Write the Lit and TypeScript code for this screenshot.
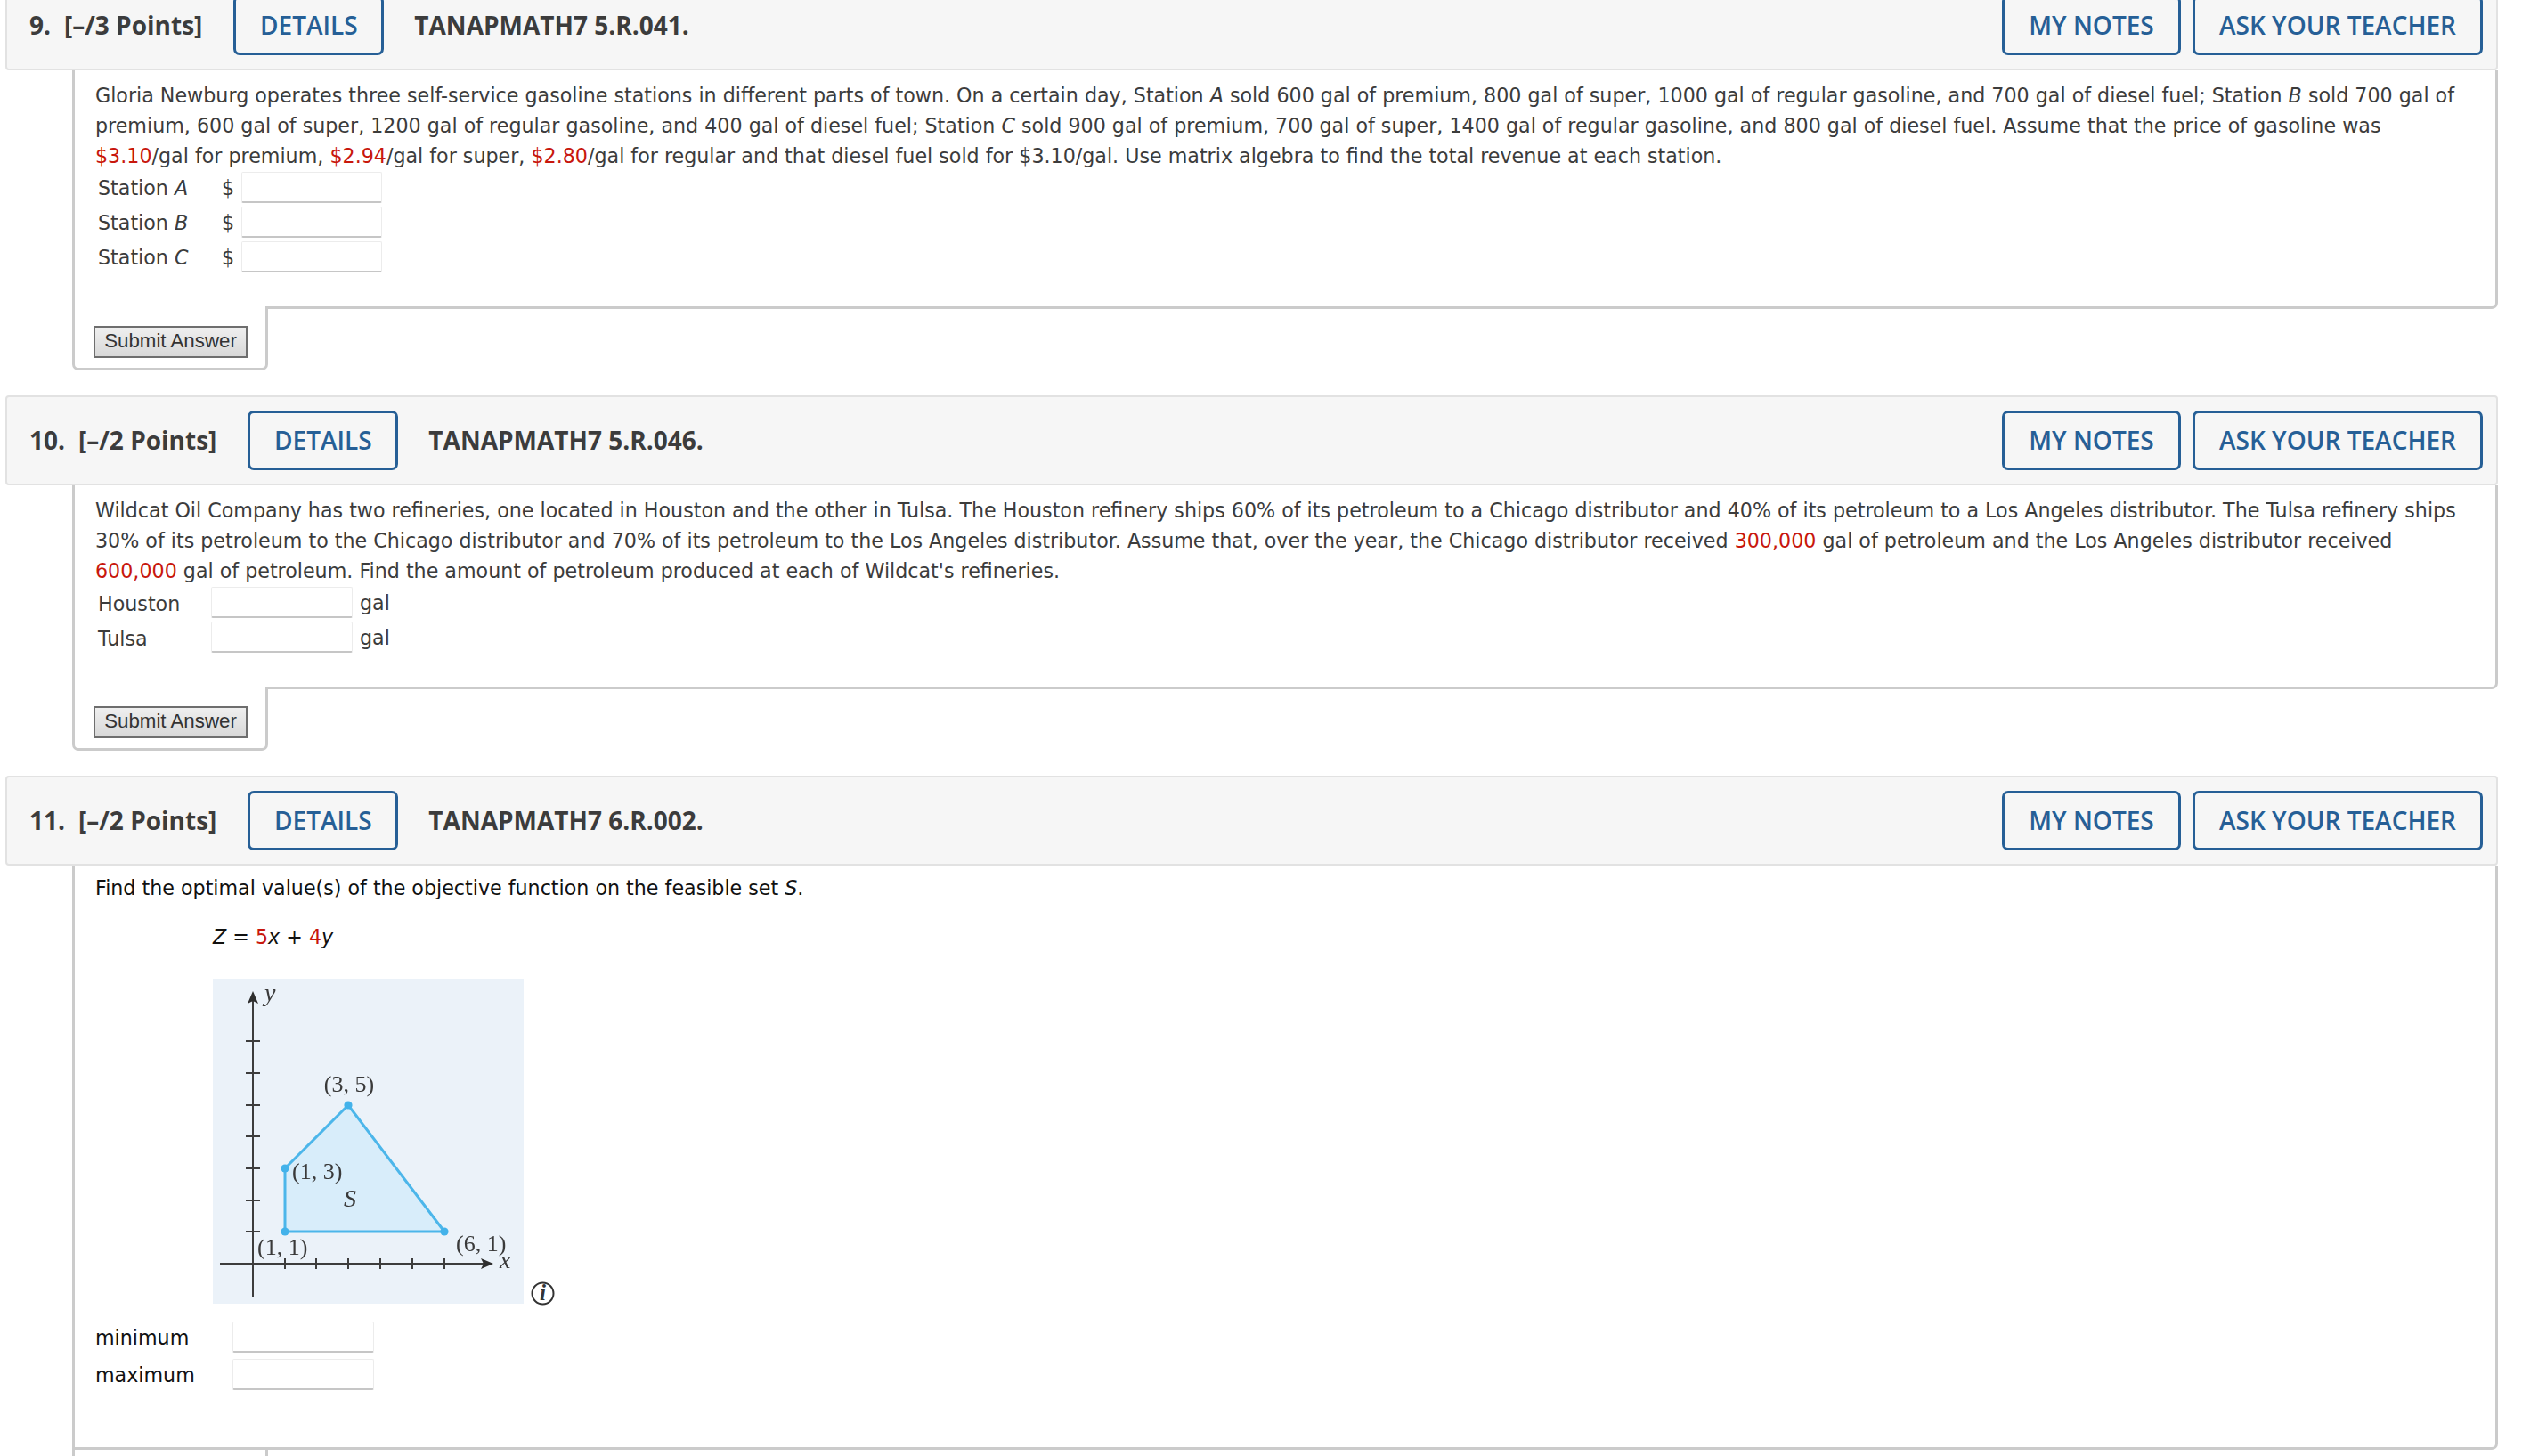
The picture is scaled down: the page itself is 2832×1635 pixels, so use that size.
import { LitElement, html, css, svg } from 'lit';
import { customElement } from 'lit/decorators.js';

const yTicks = [70, 106, 142, 177, 213, 249, 284];
const xTicks = [81, 116, 152, 188, 224, 260];

@customElement('app-root')
export class AppRoot extends LitElement {
  static styles = css`
    :host {
      display: block;
      height: 1635px;
      overflow: hidden;
      padding: 0 27px 0 6px;
      box-sizing: border-box;
      background: #fff;
      color: #3c3c3c;
      font-family: 'DejaVu Sans', Verdana, sans-serif;
      font-size: 22.2px;
    }

    .question {
      margin-bottom: 28px;
    }

    .first {
      margin-top: -22px;
    }

    .head {
      display: flex;
      align-items: center;
      box-sizing: border-box;
      height: 101px;
      padding: 0 15px 0 25px;
      background: #f6f6f6;
      border: 2px solid #e2e2e2;
      border-radius: 4px;
      font-family: 'Open Sans', sans-serif;
      font-size: 28px;
      font-weight: 600;
    }

    .points {
      display: flex;
      gap: 15px;
      padding-bottom: 2px;
      font-weight: 700;
      white-space: nowrap;
    }

    .btn {
      box-sizing: border-box;
      height: 67px;
      display: flex;
      align-items: center;
      justify-content: center;
      padding-bottom: 2px;
      border: 3px solid #265f96;
      border-radius: 7px;
      color: #265f96;
      white-space: nowrap;
    }

    .details {
      width: 169px;
      margin-left: 35px;
    }

    .title {
      margin-left: 34px;
      padding-bottom: 2px;
      flex: 1;
      font-weight: 700;
      white-space: nowrap;
    }

    .notes {
      width: 201px;
      margin-right: 13px;
    }

    .ask {
      width: 326px;
    }

    .box {
      margin-left: 75px;
      padding: 11px 20px 0 23px;
      border: solid #cbcbcb;
      border-width: 0 3px 3px 3px;
      border-bottom-right-radius: 7px;
      box-sizing: border-box;
    }

    .text {
      line-height: 34px;
      white-space: nowrap;
    }

    .text i {
      font-style: oblique;
    }

    .red {
      color: #c8170d;
    }

    .answers {
      display: grid;
      row-gap: 4px;
      margin-top: 1px;
      padding-bottom: 38px;
      align-items: center;
      justify-items: start;
    }

    .answers.stations {
      grid-template-columns: 139px 22px 158px;
      padding-left: 3px;
    }

    .answers.wells {
      grid-template-columns: 127px 159px auto;
      padding-left: 3px;
    }

    .answers.wells span {
      line-height: 30px;
      padding-top: 3px;
    }

    .answers.values {
      grid-template-columns: 154px 159px;
      row-gap: 7px;
      padding-bottom: 64px;
      color: #111;
    }

    input {
      display: block;
      box-sizing: border-box;
      width: 100%;
      height: 35px;
      padding: 0;
      background: #fff;
      border: 1px solid #ececec;
      border-bottom: 2px solid #c6c6c6;
      border-radius: 2px;
      outline: none;
    }

    .answers.wells .unit {
      margin-left: 8px;
      padding-top: 0;
    }

    .tab {
      box-sizing: border-box;
      width: 220px;
      height: 72px;
      margin: -3px 0 0 75px;
      padding: 22px 0 0 21px;
      position: relative;
      background: #fff;
      border: solid #cbcbcb;
      border-width: 0 3px 3px 3px;
      border-radius: 0 0 7px 7px;
    }

    .tab.open {
      margin-top: 0;
    }

    .submit {
      display: block;
      box-sizing: border-box;
      width: 173px;
      height: 36px;
      padding: 0 0 2px;
      background: linear-gradient(#efefef, #d8d8d8);
      border: 2px solid #6e6e6e;
      color: #333;
      font-family: 'Liberation Sans', Arial, sans-serif;
      font-size: 22.3px;
    }

    .intro {
      color: #111;
      line-height: 34px;
      margin-top: -3px;
    }

    .intro i,
    .formula i {
      font-style: oblique;
    }

    .formula {
      margin: 21px 0 0 132px;
      color: #111;
      line-height: 34px;
    }

    .figure {
      display: flex;
      align-items: flex-end;
      margin: 30px 0 20px 132px;
    }

    .graph {
      display: block;
      width: 349px;
      height: 365px;
      flex: none;
      filter: blur(0.4px);
    }

    .graph text {
      font-family: 'Liberation Serif', serif;
      font-size: 26px;
      fill: #3a3a3a;
    }

    .graph .var {
      font-size: 28px;
      font-style: italic;
    }

    .info {
      display: block;
      width: 27px;
      height: 27px;
      margin: 0 0 -2px 8px;
    }

    .info text {
      font-family: 'Liberation Serif', serif;
      font-size: 25px;
      font-style: italic;
      font-weight: 700;
      fill: #333;
    }
  `;

  private head(no: string, pts: string, title: string) {
    return html`
      <div class="head">
        <div class="points"><span>${no}</span><span>${pts}</span></div>
        <div class="btn details">DETAILS</div>
        <div class="title">${title}</div>
        <div class="btn notes">MY NOTES</div>
        <div class="btn ask">ASK YOUR TEACHER</div>
      </div>
    `;
  }

  private tab() {
    return html`<div class="tab"><button class="submit">Submit Answer</button></div>`;
  }

  private graph() {
    return svg`
      <rect width="349" height="365" fill="#ebf2f9" />
      <polygon points="81,284 81,213 152,142 260,284" fill="#d8edfa" stroke="#4cb6ea" stroke-width="3" stroke-linejoin="round" />
      ${[[81, 284], [81, 213], [152, 142], [260, 284]].map(
        ([x, y]) => svg`<circle cx=${x} cy=${y} r="4.6" fill="#43b2ea" />`
      )}
      <g stroke="#3d3d3d" stroke-width="2">
        <line x1="45" y1="22" x2="45" y2="357" />
        <line x1="8" y1="320" x2="308" y2="320" />
        ${yTicks.map((y) => svg`<line x1="37" y1=${y} x2="53" y2=${y} />`)}
        ${xTicks.map((x) => svg`<line x1=${x} y1="314" x2=${x} y2="326" />`)}
      </g>
      <path d="M45 14 L51 28 L45 25 L39 28 Z" fill="#2e2e2e" />
      <path d="M315 320 L301 314 L304 320 L301 326 Z" fill="#2e2e2e" />
      <text x="153" y="127" text-anchor="middle">(3, 5)</text>
      <text x="89" y="225">(1, 3)</text>
      <text x="50" y="310">(1, 1)</text>
      <text x="273" y="306">(6, 1)</text>
      <text class="var" x="154" y="256" text-anchor="middle">S</text>
      <text class="var" x="322" y="325">x</text>
      <text class="var" x="58" y="25">y</text>
    `;
  }

  render() {
    return html`
      <section class="question first">
        ${this.head('9.', '[–/3 Points]', 'TANAPMATH7 5.R.041.')}
        <div class="box">
          <div class="text">
            Gloria Newburg operates three self-service gasoline stations in different parts of town. On a certain day, Station <i>A</i> sold 600 gal of premium, 800 gal of super, 1000 gal of regular gasoline, and 700 gal of diesel fuel; Station <i>B</i> sold 700 gal of<br />
            premium, 600 gal of super, 1200 gal of regular gasoline, and 400 gal of diesel fuel; Station <i>C</i> sold 900 gal of premium, 700 gal of super, 1400 gal of regular gasoline, and 800 gal of diesel fuel. Assume that the price of gasoline was<br />
            <span class="red">$3.10</span>/gal for premium, <span class="red">$2.94</span>/gal for super, <span class="red">$2.80</span>/gal for regular and that diesel fuel sold for $3.10/gal. Use matrix algebra to find the total revenue at each station.
          </div>
          <div class="answers stations text">
            <span>Station <i>A</i></span><span>$</span><input />
            <span>Station <i>B</i></span><span>$</span><input />
            <span>Station <i>C</i></span><span>$</span><input />
          </div>
        </div>
        ${this.tab()}
      </section>

      <section class="question">
        ${this.head('10.', '[–/2 Points]', 'TANAPMATH7 5.R.046.')}
        <div class="box">
          <div class="text">
            Wildcat Oil Company has two refineries, one located in Houston and the other in Tulsa. The Houston refinery ships 60% of its petroleum to a Chicago distributor and 40% of its petroleum to a Los Angeles distributor. The Tulsa refinery ships<br />
            30% of its petroleum to the Chicago distributor and 70% of its petroleum to the Los Angeles distributor. Assume that, over the year, the Chicago distributor received <span class="red">300,000</span> gal of petroleum and the Los Angeles distributor received<br />
            <span class="red">600,000</span> gal of petroleum. Find the amount of petroleum produced at each of Wildcat's refineries.
          </div>
          <div class="answers wells text">
            <span>Houston</span><input /><span class="unit">gal</span>
            <span>Tulsa</span><input /><span class="unit">gal</span>
          </div>
        </div>
        ${this.tab()}
      </section>

      <section class="question">
        ${this.head('11.', '[–/2 Points]', 'TANAPMATH7 6.R.002.')}
        <div class="box">
          <div class="intro">Find the optimal value(s) of the objective function on the feasible set <i>S</i>.</div>
          <div class="formula"><i>Z</i> = <span class="red">5</span><i>x</i> + <span class="red">4</span><i>y</i></div>
          <div class="figure">
            <svg class="graph" viewBox="0 0 349 365">${this.graph()}</svg>
            <svg class="info" viewBox="0 0 27 27">
              <circle cx="13.5" cy="13.5" r="12" fill="none" stroke="#333" stroke-width="2" />
              <text x="13.5" y="21" text-anchor="middle">i</text>
            </svg>
          </div>
          <div class="answers values text">
            <span>minimum</span><input />
            <span>maximum</span><input />
          </div>
        </div>
        <div class="tab open"></div>
      </section>
    `;
  }
}
